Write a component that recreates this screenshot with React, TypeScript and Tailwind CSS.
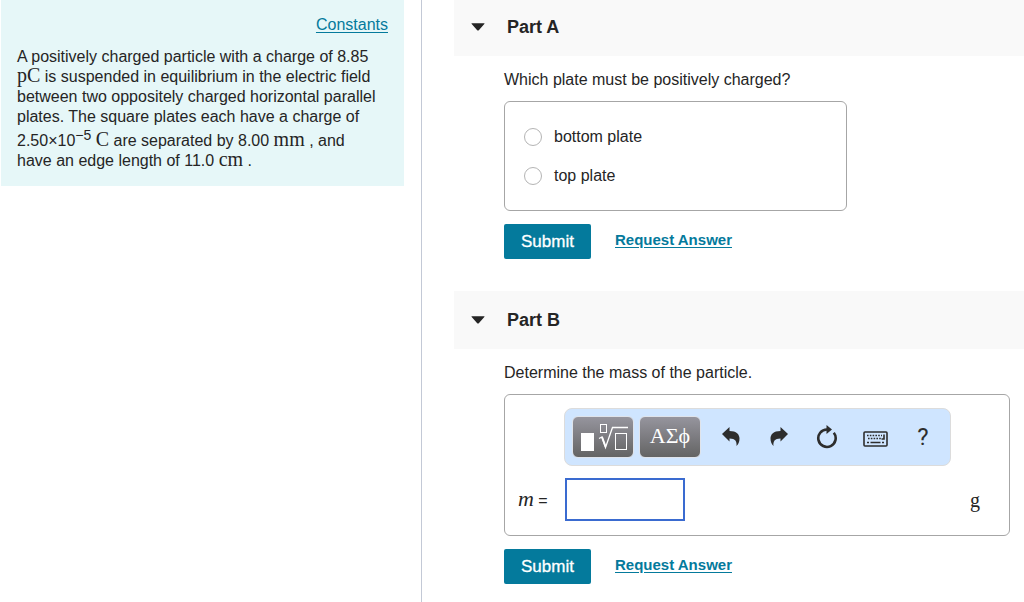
import { useState } from "react";
import type { ReactNode } from "react";

const serif = "font-['Liberation_Serif',serif]";

function Unit({ children }: { children: ReactNode }) {
    return <span className={`${serif} text-xl leading-0`}>{children}</span>;
}

function PartHeader({ title, open, onToggle }: { title: string; open: boolean; onToggle: () => void }) {
    return (
        <h2 className="bg-[#f9f9f9]">
            <button
                type="button"
                aria-expanded={open}
                onClick={onToggle}
                className="flex w-full items-center gap-[22px] px-[17px] py-[17px] text-lg leading-6 font-bold cursor-pointer"
            >
                <svg width="14" height="8" viewBox="0 0 14 8" className={open ? "" : "-rotate-90"}>
                    <path d="M1 0.3h12c.5 0 .7.4.3.8L7.8 7.2c-.5.5-1.1.5-1.6 0L.7 1.1C.3.7.5.3 1 .3z" fill="#252525" />
                </svg>
                <span>{title}</span>
            </button>
        </h2>
    );
}

function Actions() {
    return (
        <div className="mt-[13px] flex items-center gap-6">
            <button type="button" className="h-[35px] w-[87px] rounded-xs bg-[#047a9c] text-[17px] font-medium text-white cursor-pointer [-webkit-text-stroke:0.3px_white]">
                Submit
            </button>
            <a href="#" className="pb-1 text-[15px] leading-5 font-bold text-[#047a9c] underline underline-offset-2">Request Answer</a>
        </div>
    );
}

const keyClass = "flex h-[42px] w-[62px] items-center justify-center rounded-md border border-[#dfe3ea] bg-linear-to-b from-[#96959e] to-[#646464] text-white cursor-pointer";
const toolClass = "flex h-10 w-12 items-center justify-center text-[#2d2d2d] cursor-pointer";

function Toolbar() {
    return (
        <div className="ml-[46px] flex w-fit items-center rounded-lg border border-[#dcdcdc] bg-[#cfe5ff] py-[7px] pr-[3px] pl-[7px]">
            <div className="flex gap-[5px]">
                <button type="button" aria-label="Templates" className={keyClass}>
                    <svg width="50" height="32" viewBox="0 0 50 32" fill="none" stroke="currentColor">
                        <rect x="3" y="12" width="13" height="18" fill="currentColor" stroke="none" />
                        <rect x="22.5" y="3.5" width="6" height="8" />
                        <path d="M21 17.5l3-1.5 3.5 10.5L34.5 6.5H50" strokeWidth="1.3" />
                        <path d="M24 16l3.5 9.5" strokeWidth="2" />
                        <rect x="37.5" y="12.5" width="11" height="16" />
                    </svg>
                </button>
                <button type="button" aria-label="Greek letters" className={`${keyClass} ${serif} pb-0.5 text-[22px]`}>
                    ΑΣϕ
                </button>
            </div>
            <div className="ml-[6px] flex items-center">
                <button type="button" aria-label="Undo" className={toolClass}>
                    <svg width="18" height="20" viewBox="0 0 18 20" fill="currentColor">
                        <path d="M0 7L7.5 0v4c7 0 10 3.5 10 7.5 0 3-1 5.5-3 7.5 .5-4.5-1-7.5-7-7.5V14.5z" />
                    </svg>
                </button>
                <button type="button" aria-label="Redo" className={toolClass}>
                    <svg width="18" height="20" viewBox="0 0 18 20" fill="currentColor">
                        <path d="M18 7L10.5 0v4c-7 0-10 3.5-10 7.5 0 3 1 5.5 3 7.5-.5-4.5 1-7.5 7-7.5V14.5z" />
                    </svg>
                </button>
                <button type="button" aria-label="Reset" className={toolClass}>
                    <svg width="22" height="24" viewBox="0 0 22 24" fill="none" stroke="currentColor">
                        <path d="M12 4.5H11a8.7 8.7 0 1 0 6.8 3.3" strokeWidth="2.6" />
                        <path d="M10.5 0l5.5 4.5-5.5 4.5z" fill="currentColor" stroke="none" />
                    </svg>
                </button>
                <button type="button" aria-label="Keyboard" className={`${toolClass} pt-1`}>
                    <svg width="25" height="16" viewBox="0 0 25 16" fill="none" stroke="currentColor">
                        <rect x="1" y="1" width="23" height="14" rx="1" strokeWidth="1.6" />
                        <path d="M4 4.5h15M5 7.5h13" strokeWidth="1.6" strokeDasharray="1.6 1.2" />
                        <path d="M21 3.5v4.5h-2.5M4 11.5h2M7.5 11.5h10M19 11.5h2" strokeWidth="1.6" />
                    </svg>
                </button>
                <button type="button" aria-label="Help" className={`${toolClass} font-['Roboto',sans-serif] text-2xl`}>
                    ?
                </button>
            </div>
        </div>
    );
}

export default function App() {
    const [openA, setOpenA] = useState(true);
    const [openB, setOpenB] = useState(true);
    const [plate, setPlate] = useState("");
    const [mass, setMass] = useState("");

    const plates = ["bottom plate", "top plate"];

    return (
        <div className="flex min-h-screen bg-white font-['Liberation_Sans',Arial,sans-serif] text-base leading-5 text-[#252525]">
            <aside className="w-[422px] shrink-0 border-r border-[#c3c9d6] pr-[17px] pl-px">
                <div className="bg-[#e6f7f8] px-4 pt-[15px] pb-[15px]">
                    <div className="text-right">
                        <a href="#" className="text-[#047a9c] underline underline-offset-2">Constants</a>
                    </div>
                    <p className="mt-3 pr-2">
                        A positively charged particle with a charge of 8.85 <Unit>pC</Unit> is suspended in equilibrium in the electric field between two oppositely charged horizontal parallel plates. The square plates each have a charge of 2.50×10<sup className="static align-super text-sm leading-4">−5</sup> <Unit>C</Unit> are separated by 8.00 <Unit>mm</Unit> , and have an edge length of 11.0 <Unit>cm</Unit> .
                    </p>
                </div>
            </aside>

            <main className="min-w-0 flex-1 pl-8">
                <section className="-mt-0.5">
                    <PartHeader title="Part A" open={openA} onToggle={() => setOpenA(!openA)} />
                    {openA && (
                        <div className="pt-[14px] pr-[14px] pb-8 pl-[50px]">
                            <p id="question-a">Which plate must be positively charged?</p>
                            <div role="radiogroup" aria-labelledby="question-a" className="mt-[11px] flex w-[343px] max-w-full flex-col gap-[19px] rounded-md border border-[#a6a6a6] px-[19px] pt-[25px] pb-6">
                                {plates.map((item) => (
                                    <label key={item} className="flex items-center gap-3 cursor-pointer">
                                        <input
                                            type="radio"
                                            name="plate"
                                            value={item}
                                            checked={plate === item}
                                            onChange={() => setPlate(item)}
                                            className="size-[18px] appearance-none rounded-full border border-[#b4b4b4] bg-white checked:border-[5px] checked:border-[#047a9c]"
                                        />
                                        <span>{item}</span>
                                    </label>
                                ))}
                            </div>
                            <Actions />
                        </div>
                    )}
                </section>

                <section>
                    <PartHeader title="Part B" open={openB} onToggle={() => setOpenB(!openB)} />
                    {openB && (
                        <div className="pt-[14px] pr-[14px] pb-4 pl-[50px]">
                            <p>Determine the mass of the particle.</p>
                            <div className="mt-[11px] rounded-md border border-[#a6a6a6] px-[13px] pt-[13px] pb-[14px]">
                                <Toolbar />
                                <div className="mt-3 flex items-center">
                                    <label htmlFor="mass" className="w-[47px]">
                                        <i className={`${serif} text-[22px] leading-5`}>m</i> =
                                    </label>
                                    <input
                                        id="mass"
                                        type="text"
                                        value={mass}
                                        onChange={(e) => setMass(e.target.value)}
                                        className="h-[43px] w-[120px] border-2 border-[#3a6bd0] bg-white px-2 outline-none"
                                    />
                                    <span className={`${serif} mr-4 ml-auto text-xl`}>g</span>
                                </div>
                            </div>
                            <Actions />
                        </div>
                    )}
                </section>
            </main>
        </div>
    );
}
